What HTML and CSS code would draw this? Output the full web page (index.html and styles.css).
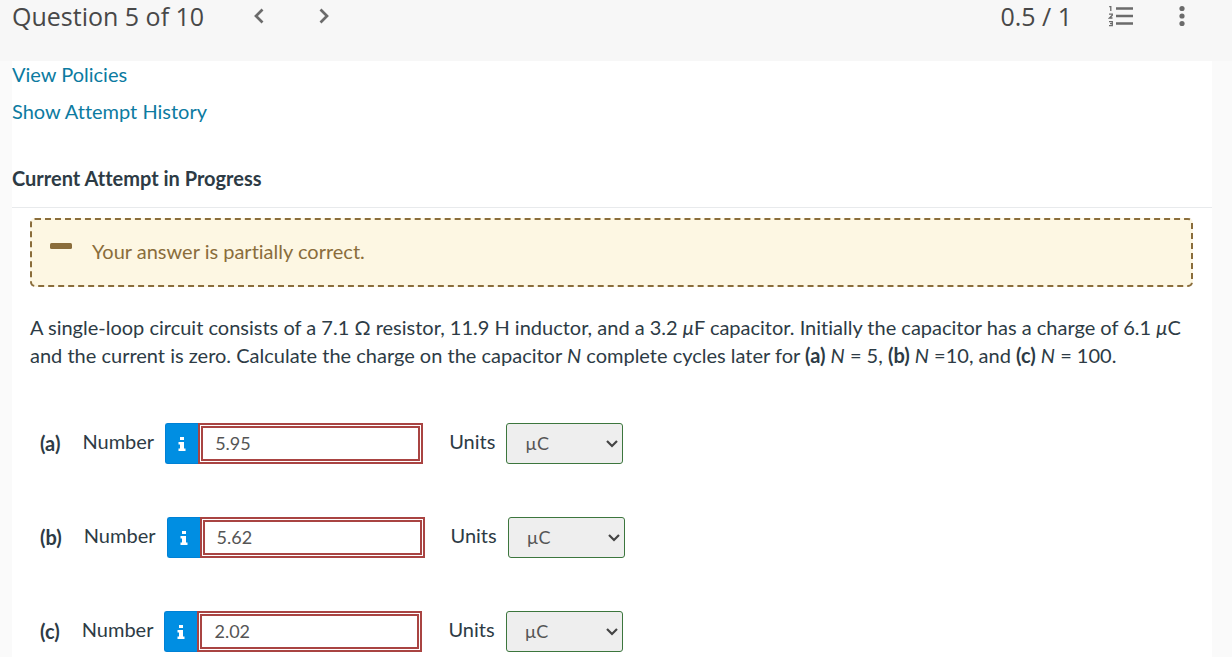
FILE: index.html
```
<!DOCTYPE html>
<html lang="en">
<head>
  <meta charset="utf-8">
  <title>Question 5 of 10</title>
  <link rel="stylesheet" href="styles.css">
</head>
<body>
  <header class="topbar">
    <h1 class="topbar-title">Question 5 of 10</h1>
    <nav class="pager">
      <button type="button" class="icon-btn" aria-label="Previous question">
        <svg width="10" height="16" viewBox="0 0 10 16"><path d="M8.5 1.5L2 8l6.500 6.500" fill="none" stroke="#6b6b6b" stroke-width="2.700"/></svg>
      </button>
      <button type="button" class="icon-btn" aria-label="Next question">
        <svg width="10" height="16" viewBox="0 0 10 16"><path d="M1.500 1.500L8 8l-6.500 6.500" fill="none" stroke="#6b6b6b" stroke-width="2.700"/></svg>
      </button>
    </nav>
    <div class="score">0.5 / 1</div>
    <button type="button" class="icon-btn list-btn" aria-label="Question list">
      <svg width="26" height="22" viewBox="0 0 26 22" fill="none" stroke="#6b6b6b">
        <path d="M8 3.500h17M8 11h17M8 18.500h17" stroke-width="2.400"/>
        <path d="M1.200 1.700h1.600v4.300M1 9.200h3.300v1L1.500 13h3M1 16.700h3.300v4H1M2 18.600h2" stroke-width="1.300"/>
      </svg>
    </button>
    <button type="button" class="icon-btn" aria-label="More options">
      <svg width="6" height="22" viewBox="0 0 6 22" fill="#6b6b6b"><circle cx="3" cy="3.500" r="2.600"/><circle cx="3" cy="11" r="2.600"/><circle cx="3" cy="18.500" r="2.600"/></svg>
    </button>
  </header>

  <main class="page">
    <div class="links">
      <a href="#">View Policies</a>
      <a href="#">Show Attempt History</a>
    </div>
    <h2 class="attempt">Current Attempt in Progress</h2>

    <div class="question">
      <div class="alert">
        <svg class="alert-icon" width="22" height="6" viewBox="0 0 22 6"><rect width="22" height="6" rx="1.500" fill="#8a6d3b"/></svg>
        <span>Your answer is partially correct.</span>
      </div>

      <p class="text">A single-loop circuit consists of a 7.1 Ω resistor, 11.9 H inductor, and a 3.2 <i>μ</i>F capacitor. Initially the capacitor has a charge of 6.1 <i>μ</i>C and the current is zero. Calculate the charge on the capacitor <i>N</i> complete cycles later for <b>(a)</b> <i>N</i> = 5, <b>(b)</b> <i>N</i> =10, and <b>(c)</b> <i>N</i> = 100.</p>

      <div class="answers">
        <div class="row">
          <b class="part">(a)</b>
          <label class="number-label" for="num-a">Number</label>
          <div class="number">
            <button type="button" class="info" aria-label="Information">
              <svg width="8" height="14" viewBox="0 0 8 14" fill="#fff"><path d="M2 0h4v3H2zM.500 5H6v6.500h1.500V14H.500v-2.500H2v-4H.500z"/></svg>
            </button>
            <input type="text" id="num-a" value="5.95">
          </div>
          <label class="units-label" for="unit-a">Units</label>
          <div class="units">
            <select id="unit-a"><option>µC</option></select>
            <svg class="caret" width="12" height="8" viewBox="0 0 12 8"><path d="M1 1l5 5 5-5" fill="none" stroke="#444" stroke-width="2.200"/></svg>
          </div>
        </div>
        <div class="row">
          <b class="part">(b)</b>
          <label class="number-label" for="num-b">Number</label>
          <div class="number">
            <button type="button" class="info" aria-label="Information">
              <svg width="8" height="14" viewBox="0 0 8 14" fill="#fff"><path d="M2 0h4v3H2zM.500 5H6v6.500h1.500V14H.500v-2.500H2v-4H.500z"/></svg>
            </button>
            <input type="text" id="num-b" value="5.62">
          </div>
          <label class="units-label" for="unit-b">Units</label>
          <div class="units">
            <select id="unit-b"><option>µC</option></select>
            <svg class="caret" width="12" height="8" viewBox="0 0 12 8"><path d="M1 1l5 5 5-5" fill="none" stroke="#444" stroke-width="2.200"/></svg>
          </div>
        </div>
        <div class="row">
          <b class="part">(c)</b>
          <label class="number-label" for="num-c">Number</label>
          <div class="number">
            <button type="button" class="info" aria-label="Information">
              <svg width="8" height="14" viewBox="0 0 8 14" fill="#fff"><path d="M2 0h4v3H2zM.500 5H6v6.500h1.500V14H.500v-2.500H2v-4H.500z"/></svg>
            </button>
            <input type="text" id="num-c" value="2.02">
          </div>
          <label class="units-label" for="unit-c">Units</label>
          <div class="units">
            <select id="unit-c"><option>µC</option></select>
            <svg class="caret" width="12" height="8" viewBox="0 0 12 8"><path d="M1 1l5 5 5-5" fill="none" stroke="#444" stroke-width="2.200"/></svg>
          </div>
        </div>
      </div>
    </div>
  </main>
</body>
</html>
```

FILE: styles.css
```
* {
  box-sizing: border-box;
}
body {
  margin: 0;
  background: #fafafa;
  color: #2d3b45;
  font-family: Lato, "Liberation Sans", sans-serif;
  font-size: 20px;
  line-height: 28px;
  font-variant-ligatures: none;
}
button {
  padding: 0;
  border: 0;
  background: none;
}
svg {
  display: block;
}

/* top bar */
.topbar {
  display: flex;
  align-items: center;
  padding: 0 47px 29px 12px;
  background: #f7f7f7;
  color: #484848;
  font-family: "Open Sans", sans-serif;
  font-size: 25px;
  line-height: 32px;
}
.topbar-title {
  margin: 0;
  font-size: 25px;
  font-weight: 400;
}
.pager {
  display: flex;
  gap: 55px;
  margin-left: 50px;
}
.score {
  margin-left: auto;
}
.list-btn {
  margin: 0 45px 0 36px;
}

.page {
  margin: 0 20px 0 12px;
  background: #fff;
}
.links {
  display: flex;
  flex-direction: column;
  align-items: flex-start;
  gap: 11px;
}
.links a {
  color: #0c7ba1;
  line-height: 26px;
  text-decoration: none;
}
.attempt {
  margin: 0;
  padding: 40px 0 15px;
  border-bottom: 1px solid #e8eaec;
  font-size: 20px;
  font-weight: 700;
}
.question {
  padding: 10px 19px 0 18px;
}
.alert {
  display: flex;
  align-items: flex-start;
  gap: 20px;
  padding: 17px 18px 20px;
  border: 2px dashed #8a6d3b;
  border-radius: 5px;
  background: #fdf7e3;
  color: #8a6d3b;
}
.alert-icon {
  margin-top: 6px;
}
.text {
  margin: 26px 0 0;
}

/* answer rows */
.answers {
  display: flex;
  flex-direction: column;
  gap: 53px;
  margin-top: 54px;
  padding: 0 0 6px 10px;
}
.row {
  display: flex;
  align-items: center;
}
.part {
  margin-bottom: 2px;
}
.number-label {
  margin: 0 11px 6px 22px;
}
.number {
  display: flex;
  width: 258px;
}
.info {
  display: flex;
  align-items: center;
  justify-content: center;
  width: 33px;
  border: 1px solid #0081d5;
  border-right: 0;
  border-radius: 3px 0 0 3px;
  background: #008ee2;
}
.number input {
  flex: 1;
  min-width: 0;
  height: 41px;
  padding: 0 12px 2px;
  border: 5px double #a94442;
  background: #fff;
  color: #555;
  font: 18px Lato, sans-serif;
}
.units-label {
  margin: 0 11px 6px 26px;
}
.units {
  position: relative;
}
.units select {
  display: block;
  width: 117px;
  height: 41px;
  padding: 0 18px 2px;
  border: 1px solid #3c763d;
  border-radius: 3px;
  background: #eee;
  color: #555;
  font: 18px Lato, sans-serif;
  appearance: none;
}
.caret {
  position: absolute;
  top: 17px;
  right: 5px;
  pointer-events: none;
}
```
